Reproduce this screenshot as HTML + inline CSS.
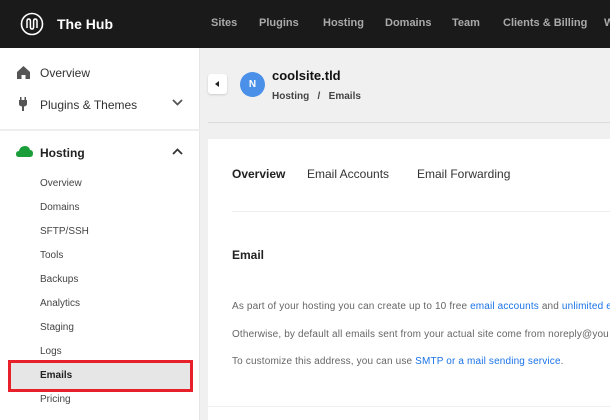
<!DOCTYPE html>
<html><head><style>
*{margin:0;padding:0;box-sizing:border-box}
body{width:610px;height:420px;overflow:hidden;font-family:"Liberation Sans",sans-serif;background:#f0f0f0;position:relative}
.hdr{position:absolute;left:0;top:0;width:610px;height:48px;background:#1a1a1a;overflow:hidden}
.hdr .t{position:absolute;left:57px;top:16px;color:#fff;font-weight:bold;font-size:14px}
.hdr .n{position:absolute;top:17px;color:#aaa;font-size:11px;font-weight:bold}
.side{position:absolute;left:0;top:48px;width:200px;height:372px;background:#fff;border-right:1px solid #e6e6e6}
.s{position:absolute;font-size:12px;color:#333}
.sub{position:absolute;left:40px;font-size:10px;color:#444}
.card{position:absolute;left:208px;top:139px;width:402px;height:281px;background:#fff;overflow:hidden}
.a{position:absolute;left:24px;font-size:10px;color:#666;letter-spacing:0.15px;white-space:nowrap}
.blue{color:#1a73e8}
</style></head><body>
<div class="hdr">
<svg style="position:absolute;left:20px;top:12px" width="24" height="24" viewBox="0 0 24 24"><circle cx="12" cy="12" r="10.5" fill="none" stroke="#fff" stroke-width="1.6"/><path d="M7 16V9q0-2 1.7-2t1.7 2v6q0 2 1.6 2t1.6-2V9q0-2 1.7-2T17 9v7" fill="none" stroke="#fff" stroke-width="1.5"/></svg>
<div class="t">The Hub</div>
<div class="n" style="left:211px">Sites</div><div class="n" style="left:259px">Plugins</div><div class="n" style="left:323px">Hosting</div><div class="n" style="left:385px">Domains</div><div class="n" style="left:452px">Team</div><div class="n" style="left:503px">Clients &amp; Billing</div><div class="n" style="left:604px">W</div>
</div>
<div class="side">
<svg style="position:absolute;left:17px;top:18px" width="13" height="13" viewBox="0 0 13 13"><path d="M6.5 0L0 6v7h4.5V9h4v4H13V6z" fill="#555"/></svg>
<div class="s" style="left:40px;top:18px">Overview</div>
<svg style="position:absolute;left:19px;top:49px" width="8" height="14" viewBox="0 0 8 14"><path d="M1 0h1.5v3h3V0H7v3h1v4q0 2-3 2.5V14H3V9.5Q0 9 0 7V3h1z" fill="#555"/></svg>
<div class="s" style="left:40px;top:50px">Plugins &amp; Themes</div>
<svg style="position:absolute;left:172px;top:51px" width="11" height="8" viewBox="0 0 11 8"><path d="M1 1l4.5 4.5L10 1" fill="none" stroke="#555" stroke-width="1.8"/></svg>
<div style="position:absolute;left:0;top:81px;width:200px;height:2px;background:#eee"></div>
<svg style="position:absolute;left:16px;top:98px" width="17" height="11" viewBox="0 0 17 11"><path d="M3 11Q0 11 0 8q0-3 3-3 1-5 6-5 4 0 5 4 3 0 3 3.5T14 11z" fill="#1a9e3a"/></svg>
<div class="s" style="left:40px;top:98px;font-weight:bold;color:#222">Hosting</div>
<svg style="position:absolute;left:172px;top:100px" width="11" height="8" viewBox="0 0 11 8"><path d="M1 6l4.5-4.5L10 6" fill="none" stroke="#333" stroke-width="1.8"/></svg>
<div class="sub" style="top:130px">Overview</div>
<div class="sub" style="top:154px">Domains</div>
<div class="sub" style="top:178px">SFTP/SSH</div>
<div class="sub" style="top:202px">Tools</div>
<div class="sub" style="top:226px">Backups</div>
<div class="sub" style="top:250px">Analytics</div>
<div class="sub" style="top:274px">Staging</div>
<div class="sub" style="top:298px">Logs</div>
<div style="position:absolute;left:8px;top:312px;width:185px;height:32px;border:3px solid #e8202a;background:#e6e6e6"></div>
<div class="sub" style="top:322px;font-weight:bold;color:#222">Emails</div>
<div class="sub" style="top:346px">Pricing</div>
</div>
<div style="position:absolute;left:208px;top:74px;width:19px;height:20px;background:#fff;border-radius:3px;box-shadow:0 1px 2px rgba(0,0,0,.15)"></div>
<svg style="position:absolute;left:215px;top:81px" width="5" height="6" viewBox="0 0 5 6"><path d="M4 0L0 3l4 3z" fill="#222"/></svg>
<div style="position:absolute;left:240px;top:72px;width:25px;height:25px;border-radius:50%;background:#4a8fe8;color:#fff;font-size:10px;font-weight:bold;text-align:center;line-height:25px">N</div>
<div style="position:absolute;left:272px;top:68px;font-size:13px;font-weight:bold;color:#111">coolsite.tld</div>
<div style="position:absolute;left:272px;top:91px;font-size:10px;color:#444;font-weight:bold">Hosting &nbsp; / &nbsp; Emails</div>
<div style="position:absolute;left:208px;top:122px;width:402px;height:1px;background:#ddd"></div>
<div class="card">
<div style="position:absolute;left:24px;top:28px;font-size:12px;font-weight:bold;color:#222">Overview</div>
<div style="position:absolute;left:99px;top:28px;font-size:12px;color:#333">Email Accounts</div>
<div style="position:absolute;left:209px;top:28px;font-size:12px;color:#333">Email Forwarding</div>
<div style="position:absolute;left:24px;top:72px;width:378px;height:1px;background:#eee"></div>
<div style="position:absolute;left:24px;top:109px;font-size:12px;font-weight:bold;color:#222">Email</div>
<div class="a" style="top:162px">As part of your hosting you can create up to 10 free <span class="blue">email accounts</span> and <span class="blue">unlimited e</span></div>
<div class="a" style="top:190px">Otherwise, by default all emails sent from your actual site come from noreply@you</div>
<div class="a" style="top:217px">To customize this address, you can use <span class="blue">SMTP or a mail sending service</span>.</div>
<div style="position:absolute;left:0;top:267px;width:402px;height:1px;background:#eee"></div>
</div>
</body></html>
